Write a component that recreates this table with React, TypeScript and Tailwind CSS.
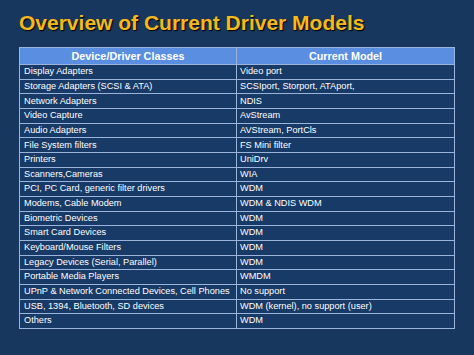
const rows: [string, string][] = [
  ["Display Adapters", "Video port"],
  ["Storage Adapters (SCSI & ATA)", "SCSIport, Storport, ATAport,"],
  ["Network Adapters", "NDIS"],
  ["Video Capture", "AvStream"],
  ["Audio Adapters", "AVStream, PortCls"],
  ["File System filters", "FS Mini filter"],
  ["Printers", "UniDrv"],
  ["Scanners,Cameras", "WIA"],
  ["PCI, PC Card, generic filter drivers", "WDM"],
  ["Modems, Cable Modem", "WDM & NDIS WDM"],
  ["Biometric Devices", "WDM"],
  ["Smart Card Devices", "WDM"],
  ["Keyboard/Mouse Filters", "WDM"],
  ["Legacy Devices (Serial, Parallel)", "WDM"],
  ["Portable Media Players", "WMDM"],
  ["UPnP & Network Connected Devices, Cell Phones", "No support"],
  ["USB, 1394, Bluetooth, SD devices", "WDM (kernel), no support (user)"],
  ["Others", "WDM"],
]

export default function App() {
  return (
    <div className="w-[474px] h-[355px] bg-[#17375e] text-white font-['Liberation_Sans',Arial,sans-serif] pt-[10px] px-[19px] overflow-hidden">
      <h1 className="text-[21px] leading-[26px] font-bold text-[#f6b91a] [text-shadow:1px_1px_1px_#000]">
        Overview of Current Driver Models
      </h1>

      <table className="mt-[11px] w-[436px] table-fixed border-collapse border border-[#9ab4dc] text-[9.2px] leading-none">
        <thead>
          <tr className="bg-[#5a8ee0] h-[17px]">
            <th className="w-[217px] border border-[#9ab4dc] text-[10.8px] font-bold p-0">Device/Driver Classes</th>
            <th className="border border-[#9ab4dc] text-[10.8px] font-bold p-0">Current Model</th>
          </tr>
        </thead>
        <tbody>
          {rows.map(([device, model]) => (
            <tr key={device} className="bg-[#183a66] h-[14.67px]">
              <td className="border border-[#9ab4dc] px-[4px] py-0 whitespace-nowrap">{device}</td>
              <td className="border border-[#9ab4dc] px-[3px] py-0 whitespace-nowrap">{model}</td>
            </tr>
          ))}
        </tbody>
      </table>
    </div>
  )
}
